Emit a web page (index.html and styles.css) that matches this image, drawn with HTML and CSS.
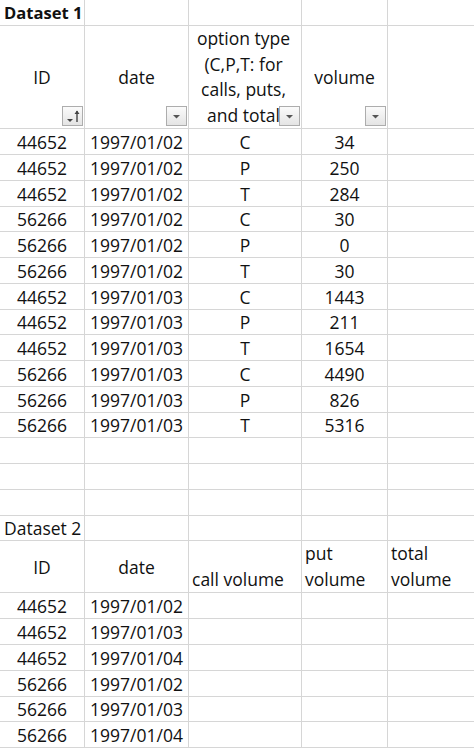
FILE: index.html
```html
<!DOCTYPE html>
<html lang="en">
<head>
<meta charset="UTF-8" />
<meta name="viewport" content="width=device-width, initial-scale=1" />
<title>Datasets</title>
<link rel="stylesheet" href="styles.css">
</head>
<body>

<table class="sheet">
  <colgroup>
    <col class="col-a"><col class="col-b"><col class="col-c"><col class="col-d"><col class="col-e">
  </colgroup>
  <tbody>
    <tr class="r26"><td class="label bold">Dataset 1</td><td></td><td></td><td></td><td></td></tr>
    <tr class="head1">
      <td class="center">ID
        <span class="filter">
          <svg width="19" height="18" viewBox="0 0 19 18"><path d="M4 12h6l-3 3z" fill="#444"/><path d="M14 4v11" stroke="#444" stroke-width="1.4"/><path d="M11.5 7l2.5-3.5 2.5 3.5z" fill="#444"/></svg>
        </span>
      </td>
      <td class="center">date
        <span class="filter"><svg width="19" height="18" viewBox="0 0 19 18"><path d="M6 8h7l-3.5 3.5z" fill="#555"/></svg></span>
      </td>
      <td class="center wrap">option type (C,P,T: for calls, puts, and total
        <span class="filter"><svg width="19" height="18" viewBox="0 0 19 18"><path d="M6 8h7l-3.5 3.5z" fill="#555"/></svg></span>
      </td>
      <td class="center">volume
        <span class="filter"><svg width="19" height="18" viewBox="0 0 19 18"><path d="M6 8h7l-3.5 3.5z" fill="#555"/></svg></span>
      </td>
      <td></td>
    </tr>
    <tr class="r26"><td>44652</td><td>1997/01/02</td><td>C</td><td>34</td><td></td></tr>
    <tr class="r26"><td>44652</td><td>1997/01/02</td><td>P</td><td>250</td><td></td></tr>
    <tr class="r26"><td>44652</td><td>1997/01/02</td><td>T</td><td>284</td><td></td></tr>
    <tr class="r25"><td>56266</td><td>1997/01/02</td><td>C</td><td>30</td><td></td></tr>
    <tr class="r26"><td>56266</td><td>1997/01/02</td><td>P</td><td>0</td><td></td></tr>
    <tr class="r26"><td>56266</td><td>1997/01/02</td><td>T</td><td>30</td><td></td></tr>
    <tr class="r26"><td>44652</td><td>1997/01/03</td><td>C</td><td>1443</td><td></td></tr>
    <tr class="r25"><td>44652</td><td>1997/01/03</td><td>P</td><td>211</td><td></td></tr>
    <tr class="r26"><td>44652</td><td>1997/01/03</td><td>T</td><td>1654</td><td></td></tr>
    <tr class="r26"><td>56266</td><td>1997/01/03</td><td>C</td><td>4490</td><td></td></tr>
    <tr class="r26"><td>56266</td><td>1997/01/03</td><td>P</td><td>826</td><td></td></tr>
    <tr class="r25"><td>56266</td><td>1997/01/03</td><td>T</td><td>5316</td><td></td></tr>
    <tr class="r26"><td></td><td></td><td></td><td></td><td></td></tr>
    <tr class="r26"><td></td><td></td><td></td><td></td><td></td></tr>
    <tr class="r26"><td></td><td></td><td></td><td></td><td></td></tr>
    <tr class="r25"><td class="label">Dataset 2</td><td></td><td></td><td></td><td></td></tr>
    <tr class="head2">
      <td class="center">ID</td>
      <td class="center">date</td>
      <td class="left bottom">call volume</td>
      <td class="left">put volume</td>
      <td class="left">total volume</td>
    </tr>
    <tr class="r26"><td>44652</td><td>1997/01/02</td><td></td><td></td><td></td></tr>
    <tr class="r26"><td>44652</td><td>1997/01/03</td><td></td><td></td><td></td></tr>
    <tr class="r26"><td>44652</td><td>1997/01/04</td><td></td><td></td><td></td></tr>
    <tr class="r26"><td>56266</td><td>1997/01/02</td><td></td><td></td><td></td></tr>
    <tr class="r25"><td>56266</td><td>1997/01/03</td><td></td><td></td><td></td></tr>
    <tr class="r26"><td>56266</td><td>1997/01/04</td><td></td><td></td><td></td></tr>
  </tbody>
</table>

</body>
</html>
```

FILE: styles.css
```css
body {
  margin: 0;
  background: #fff;
  overflow: hidden;
  font-family: 'Open Sans', 'Liberation Sans', Arial, sans-serif;
  font-size: 17.5px;
  color: #111;
}
.sheet {
  border-collapse: separate;
  border-spacing: 0;
  table-layout: fixed;
  width: 474px;
}
.col-a { width: 85px; }
.col-b { width: 104px; }
.col-c { width: 113px; }
.col-d { width: 86px; }
.col-e { width: 86px; }

.sheet td {
  padding: 0;
  border-right: 1px solid #d6d6d6;
  border-bottom: 1px solid #d6d6d6;
  text-align: center;
  vertical-align: middle;
  line-height: 22px;
  white-space: nowrap;
  overflow: hidden;
}
.sheet td:last-child {
  border-right: none;
}
.r26 { height: 26px; }
.r25 { height: 25px; }
.head1 { height: 103px; }
.head2 { height: 52px; }

.sheet td.label {
  text-align: left;
  padding-left: 4px;
  overflow: visible;
}
.bold {
  font-weight: 700;
  font-size: 16.6px;
}
.head1 td {
  position: relative;
}
.sheet td.wrap {
  white-space: normal;
  line-height: 25.5px;
  padding: 0 3px 0 0;
}
.sheet td.left {
  text-align: left;
  padding-left: 3px;
  white-space: normal;
  line-height: 25.5px;
}
.sheet td.bottom {
  vertical-align: bottom;
  white-space: nowrap;
}
/* кнопка фильтра */
.filter {
  position: absolute;
  right: 1px;
  bottom: 2px;
  width: 19px;
  height: 18px;
  border: 1px solid #adadad;
  background: linear-gradient(#fbfbfb, #e4e4e4);
  line-height: 0;
}
```
